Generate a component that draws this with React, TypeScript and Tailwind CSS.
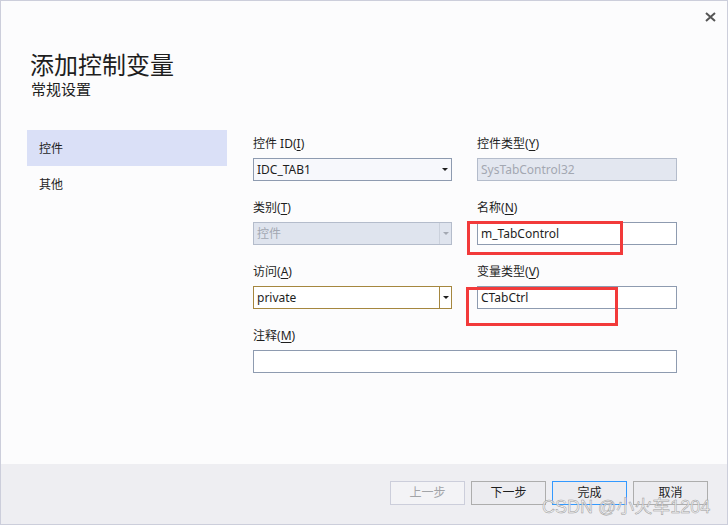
import type { ReactNode } from "react";

const Arrow = ({ color = "#1e1e1e" }: { color?: string }) => (
  <svg width="6" height="3" viewBox="0 0 6 3">
    <polygon points="0,0 6,0 3,3" fill={color} />
  </svg>
);

const Label = ({ text, k }: { text: string; k: string }) => (
  <div className="h-[16px] leading-[16px] text-[12px] mb-[6px] text-[#1e1e1e]">
    {text}(<span className="underline underline-offset-2">{k}</span>)
  </div>
);

const Field = ({ label, k, children, wide }: { label: string; k: string; children: ReactNode; wide?: boolean }) => (
  <div className={wide ? "col-span-2" : ""}>
    <Label text={label} k={k} />
    {children}
  </div>
);

const App = () => {
  return (
    <div className="relative w-[728px] h-[525px] border border-[#cccedb] bg-[#fcfcfd] flex flex-col text-[#1e1e1e] font-['Segoe_UI','Noto_Sans','Noto_Sans_CJK_SC',sans-serif]">
      <div className="h-[51px] flex justify-end items-start pt-[11px] pr-[11px]">
        <svg width="11" height="10" viewBox="0 0 11 10">
          <path d="M1 1 L10 9 M10 1 L1 9" stroke="#555" strokeWidth="2" />
        </svg>
      </div>

      <div className="pl-[29px] text-[24px] leading-[26px]">添加控制变量</div>
      <div className="pl-[30px] mt-[2px] text-[15px] leading-[18px]">常规设置</div>

      <div className="flex mt-[32px]">
        <div className="ml-[26px] w-[200px] text-[12px]">
          <div className="h-[36px] leading-[37px] pl-[12px] bg-[#dae0f7]">控件</div>
          <div className="h-[36px] leading-[37px] pl-[12px]">其他</div>
        </div>

        <div className="ml-[26px] pt-[6px] grid grid-cols-[199px_200px] gap-x-[25px] gap-y-[19px] text-[12px]">
          <Field label="控件 ID" k="I">
            <div className="h-[23px] flex border border-[#8e9bb0] bg-[#f7f8fc]">
              <div className="flex-1 pl-[3px] leading-[21px]">IDC_TAB1</div>
              <div className="w-[13px] flex items-center justify-center">
                <Arrow />
              </div>
            </div>
          </Field>
          <Field label="控件类型" k="Y">
            <div className="h-[23px] border border-[#b4bccb] bg-[#e3e7f0] pl-[3px] leading-[21px] text-[#a3a8b2]">
              SysTabControl32
            </div>
          </Field>

          <Field label="类别" k="T">
            <div className="h-[23px] flex border border-[#b4bccb] bg-[#dfe4ee] text-[#a3a8b2]">
              <div className="flex-1 pl-[3px] leading-[21px]">控件</div>
              <div className="w-[12px] border-l border-[#cbd1dc] flex items-center justify-center">
                <Arrow color="#a3a8b2" />
              </div>
            </div>
          </Field>
          <Field label="名称" k="N">
            <div className="h-[23px] border border-[#8e9bb0] bg-white pl-[3px] leading-[21px]">m_TabControl</div>
          </Field>

          <Field label="访问" k="A">
            <div className="h-[23px] flex border border-[#a5873f] bg-white">
              <div className="flex-1 pl-[3px] leading-[21px]">private</div>
              <div className="w-[12px] border-l border-[#a5873f] flex items-center justify-center">
                <Arrow />
              </div>
            </div>
          </Field>
          <Field label="变量类型" k="V">
            <div className="h-[23px] border border-[#8e9bb0] bg-white pl-[3px] leading-[21px]">CTabCtrl</div>
          </Field>

          <Field label="注释" k="M" wide>
            <div className="h-[23px] border border-[#8e9bb0] bg-white" />
          </Field>
        </div>
      </div>

      <div className="mt-auto h-[60px] bg-[#eeeef2] flex justify-end items-start gap-[6px] pt-[17px] pr-[19px] text-[12px]">
        <button className="w-[75px] h-[24px] border border-[#cccedb] bg-[#f3f3f6] text-[#a2a4a8]">上一步</button>
        <button className="w-[75px] h-[24px] border border-[#adadad] bg-[#ececf0]">下一步</button>
        <button className="w-[75px] h-[24px] border border-[#3399ff] bg-[#ececf0]">完成</button>
        <button className="w-[75px] h-[24px] border border-[#adadad] bg-[#ececf0]">取消</button>
      </div>

      <div className="absolute left-[466px] top-[220px] w-[156px] h-[34px] border-[3px] border-[#f23a3a]" />
      <div className="absolute left-[465px] top-[286px] w-[152px] h-[39px] border-[3px] border-[#f23a3a]" />

      <div className="absolute left-[541px] top-[495px] text-[18px] leading-[22px] text-[#f8f8f8]/80 [-webkit-text-stroke:0.5px_#9a9a9a] font-['Liberation_Sans','Noto_Sans_CJK_SC',sans-serif] pointer-events-none">
        CSDN @小火车1204
      </div>
    </div>
  );
};

export default App;
